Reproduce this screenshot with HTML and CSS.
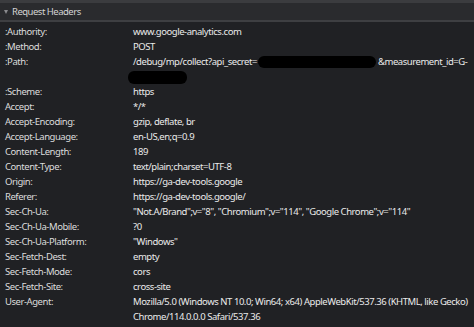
FILE: index.html
```html
<!DOCTYPE html>
<html>
<head>
<meta charset="utf-8">
<link rel="stylesheet" href="styles.css">
</head>
<body>
<div class="topbar"></div>
<div class="section-header"><span class="tri"></span><span class="title">Request Headers</span></div>
<div class="headers">
  <div class="k">:Authority:</div><div class="v">www.google-analytics.com</div>
  <div class="k">:Method:</div><div class="v">POST</div>
  <div class="k">:Path:</div><div class="v">/debug/mp/collect?api_secret=<span class="redact r1"></span>&amp;measurement_id=G-<br><span class="redact r2"></span></div>
  <div class="k">:Scheme:</div><div class="v">https</div>
  <div class="k">Accept:</div><div class="v">*/*</div>
  <div class="k">Accept-Encoding:</div><div class="v">gzip, deflate, br</div>
  <div class="k">Accept-Language:</div><div class="v">en-US,en;q=0.9</div>
  <div class="k">Content-Length:</div><div class="v">189</div>
  <div class="k">Content-Type:</div><div class="v">text/plain;charset=UTF-8</div>
  <div class="k">Origin:</div><div class="v">https://ga-dev-tools.google</div>
  <div class="k">Referer:</div><div class="v">https://ga-dev-tools.google/</div>
  <div class="k">Sec-Ch-Ua:</div><div class="v">"Not.A/Brand";v="8", "Chromium";v="114", "Google Chrome";v="114"</div>
  <div class="k">Sec-Ch-Ua-Mobile:</div><div class="v">?0</div>
  <div class="k">Sec-Ch-Ua-Platform:</div><div class="v">"Windows"</div>
  <div class="k">Sec-Fetch-Dest:</div><div class="v">empty</div>
  <div class="k">Sec-Fetch-Mode:</div><div class="v">cors</div>
  <div class="k">Sec-Fetch-Site:</div><div class="v">cross-site</div>
  <div class="k">User-Agent:</div><div class="v">Mozilla/5.0 (Windows NT 10.0; Win64; x64) AppleWebKit/537.36 (KHTML, like Gecko)<br>Chrome/114.0.0.0 Safari/537.36</div>
</div>
</body>
</html>
```
FILE: styles.css
```css
html, body {
  margin: 0;
  padding: 0;
  background: #202124;
  font-family: "Noto Sans", "Open Sans", sans-serif;
  font-size: 9.5px;
  letter-spacing: -0.45px;
  color: #e3e3e3;
  overflow: hidden;
}
.topbar {
  height: 3px;
  background: #3b3c3f;
}
.section-header {
  height: 17px;
  background: #2a2b2e;
  border-bottom: 2px solid #3e3f42;
  display: flex;
  align-items: center;
  padding-left: 4px;
  gap: 4px;
  color: #d4d4d4;
  font-size: 9.5px;
  letter-spacing: -0.5px;
}
.tri {
  width: 0;
  height: 0;
  border-left: 2.5px solid transparent;
  border-right: 2.5px solid transparent;
  border-top: 4px solid #8a8b8e;
}
.headers {
  display: grid;
  grid-template-columns: 128px 1fr;
  padding: 2px 0 0 5px;
  line-height: 15px;
}
.k { color: #dcdcdc; white-space: nowrap; }
.v { color: #ebebeb; white-space: nowrap; }
.redact {
  display: inline-block;
  background: #000;
  vertical-align: middle;
}
.r1 { width: 118px; height: 12px; border-radius: 6px; margin: 0 2px 0 1px; }
.r2 { width: 59px; height: 13px; border-radius: 6px; margin-left: -5px; }
```
